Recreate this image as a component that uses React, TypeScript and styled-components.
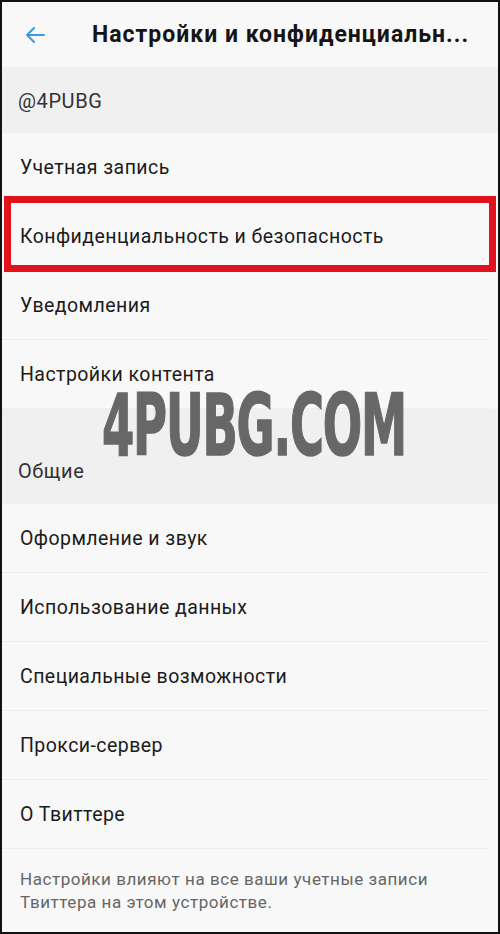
import styled, { createGlobalStyle } from "styled-components";

const Global = createGlobalStyle`
  html, body {
    margin: 0;
    padding: 0;
    background: #000;
  }
  * {
    box-sizing: border-box;
  }
`;

const Screen = styled.div`
  position: relative;
  width: 500px;
  height: 934px;
  background: #f8f8f8;
  border: 2px solid #111;
  font-family: Roboto, "Noto Sans", sans-serif;
  color: #1a1a1a;
  overflow: hidden;
  display: flex;
  flex-direction: column;
`;

const Header = styled.header`
  height: 65px;
  display: flex;
  align-items: center;
  padding: 0 8px 0 22px;
  gap: 46px;
  flex-shrink: 0;
`;

const Title = styled.h1`
  margin: 0;
  font-size: 23px;
  font-weight: 700;
  color: #151515;
  white-space: nowrap;
  letter-spacing: 1px;
`;

const SectionHead = styled.div<{ $top: number; $height: number }>`
  height: ${(p) => p.$height}px;
  padding: ${(p) => p.$top}px 16px 0;
  background: #f0f0f0;
  font-size: 20px;
  letter-spacing: 0.6px;
  color: #333;
  flex-shrink: 0;
`;

const Row = styled.div<{ $marked?: boolean }>`
  position: relative;
  height: 69px;
  display: flex;
  align-items: center;
  padding: 0 18px;
  font-size: 19.5px;
  letter-spacing: 0.45px;
  color: #1b1b1b;
  flex-shrink: 0;
  border-bottom: 1px solid #ededed;
  margin: 0 8px 0 0;
  ${(p) =>
    p.$marked &&
    `
    &::after {
      content: "";
      position: absolute;
      left: 2px;
      right: -6px;
      top: -6px;
      bottom: -2px;
      border: 7px solid #e1121b;
    }
  `}
`;

const Footer = styled.p`
  margin: 0;
  padding: 19px 18px 0;
  font-size: 17px;
  line-height: 23px;
  letter-spacing: 0.55px;
  color: #666;
`;

const Watermark = styled.div`
  position: absolute;
  left: 100px;
  top: 378px;
  font-family: "DejaVu Sans Condensed", "DejaVu Sans", sans-serif;
  font-weight: 700;
  font-size: 86px;
  line-height: 90px;
  color: #676767;
  -webkit-text-stroke: 1.5px #676767;
  white-space: nowrap;
  transform-origin: left top;
  transform: scaleX(0.6);
  letter-spacing: -2px;
`;

const BackArrow = () => (
  <svg width="22" height="20" viewBox="0 0 22 20" fill="none">
    <path
      d="M20 10H3M10 3L3 10l7 7"
      stroke="#3a9be0"
      strokeWidth="2"
      strokeLinecap="round"
      strokeLinejoin="round"
    />
  </svg>
);

const accountRows = [
  { label: "Учетная запись" },
  { label: "Конфиденциальность и безопасность", marked: true },
  { label: "Уведомления" },
  { label: "Настройки контента" },
];

const generalRows = [
  "Оформление и звук",
  "Использование данных",
  "Специальные возможности",
  "Прокси-сервер",
  "О Твиттере",
];

export default function App() {
  return (
    <Screen>
      <Global />
      <Header>
        <BackArrow />
        <Title>Настройки и конфиденциальн...</Title>
      </Header>
      <SectionHead $top={22} $height={66}>
        @4PUBG
      </SectionHead>
      {accountRows.map((r) => (
        <Row key={r.label} $marked={r.marked}>
          {r.label}
        </Row>
      ))}
      <SectionHead $top={50} $height={95}>
        Общие
      </SectionHead>
      {generalRows.map((r) => (
        <Row key={r}>{r}</Row>
      ))}
      <Footer>
        Настройки влияют на все ваши учетные записи
        <br />
        Твиттера на этом устройстве.
      </Footer>
      <Watermark>4PUBG.COM</Watermark>
    </Screen>
  );
}
